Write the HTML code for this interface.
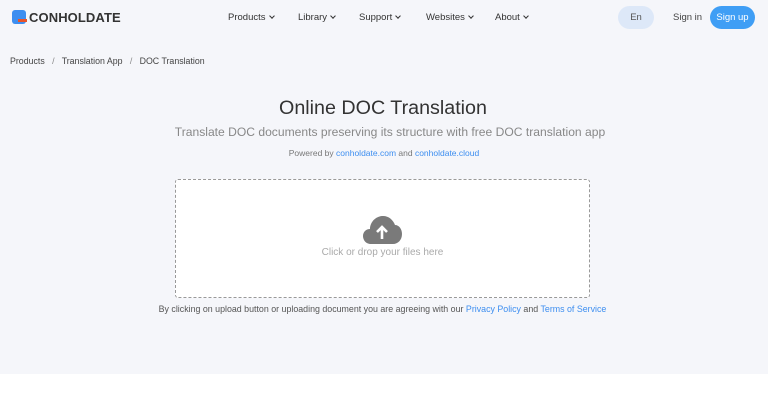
<!DOCTYPE html>
<html><head><meta charset="utf-8"><style>
*{margin:0;padding:0;box-sizing:border-box}
body{width:768px;height:405px;background:#fff;font-family:"Liberation Sans",sans-serif;position:relative;overflow:hidden}
.top{position:absolute;left:0;top:0;width:768px;height:374px;background:#f5f6fa}
.a{position:absolute;white-space:nowrap}
.nav{font-size:9.5px;color:#333;top:12px}
.chev{display:inline-block;width:4px;height:4px;border-right:1.2px solid #333;border-bottom:1.2px solid #333;transform:rotate(45deg);margin-left:4px;position:relative;top:-2px}
</style></head><body>
<div class="top"></div>
<div class="a" style="left:12px;top:10px;width:14px;height:14px;background:#3d8ef0;border-radius:3px"></div>
<div class="a" style="left:18px;top:19px;width:9px;height:3px;background:#e8542a"></div>
<div class="a" style="left:29px;top:10px;font-size:13px;font-weight:bold;color:#333;letter-spacing:.1px">CONHOLDATE</div>
<div class="a nav" style="left:228px">Products<span class="chev"></span></div>
<div class="a nav" style="left:298px">Library<span class="chev"></span></div>
<div class="a nav" style="left:359px">Support<span class="chev"></span></div>
<div class="a nav" style="left:426px">Websites<span class="chev"></span></div>
<div class="a nav" style="left:495px">About<span class="chev"></span></div>
<div class="a" style="left:618px;top:6px;width:36px;height:23px;border-radius:12px;background:#dde8f8;color:#555;font-size:9.5px;text-align:center;line-height:23px">En</div>
<div class="a" style="left:673px;top:12px;font-size:9.5px;color:#444">Sign in</div>
<div class="a" style="left:710px;top:6px;width:45px;height:23px;border-radius:12px;background:#3f9ef5;color:#fff;font-size:9.5px;text-align:center;line-height:23px">Sign up</div>
<div class="a" style="left:10px;top:56px;font-size:8.8px;color:#444">Products &nbsp;&nbsp;<span style="color:#888">/</span>&nbsp;&nbsp; Translation App &nbsp;&nbsp;<span style="color:#888">/</span>&nbsp;&nbsp; DOC Translation</div>
<div class="a" style="left:0;width:766px;text-align:center;top:97px;font-size:19.7px;color:#333">Online DOC Translation</div>
<div class="a" style="left:0;width:780px;text-align:center;top:125px;font-size:12.1px;color:#888">Translate DOC documents preserving its structure with free DOC translation app</div>
<div class="a" style="left:0;width:768px;text-align:center;top:148px;font-size:8.5px;color:#777">Powered by <span style="color:#3d8ef0">conholdate.com</span> and <span style="color:#3d8ef0">conholdate.cloud</span></div>
<div class="a" style="left:175px;top:179px;width:415px;height:119px;border:1px dashed #999;border-radius:3px;background:#fff"></div>
<svg class="a" style="left:362px;top:215px" width="40" height="30" viewBox="0 0 40 30"><path d="M9 29C3 29 1 24 1 21c0-4 3-7 7-7 0-7 6-13 13-13 6 0 10 4 12 9 4 0 7 4 7 9 0 6-4 10-9 10z" fill="#7a7a7a"/><path d="M20 24V12M15 17l5-5 5 5" stroke="#fff" stroke-width="2.6" fill="none"/></svg>
<div class="a" style="left:0;width:765px;text-align:center;top:247px;font-size:10px;color:#aaa">Click or drop your files here</div>
<div class="a" style="left:0;width:765px;text-align:center;top:304px;font-size:8.85px;color:#555">By clicking on upload button or uploading document you are agreeing with our <span style="color:#3d8ef0">Privacy Policy</span> and <span style="color:#3d8ef0">Terms of Service</span></div>
</body></html>
